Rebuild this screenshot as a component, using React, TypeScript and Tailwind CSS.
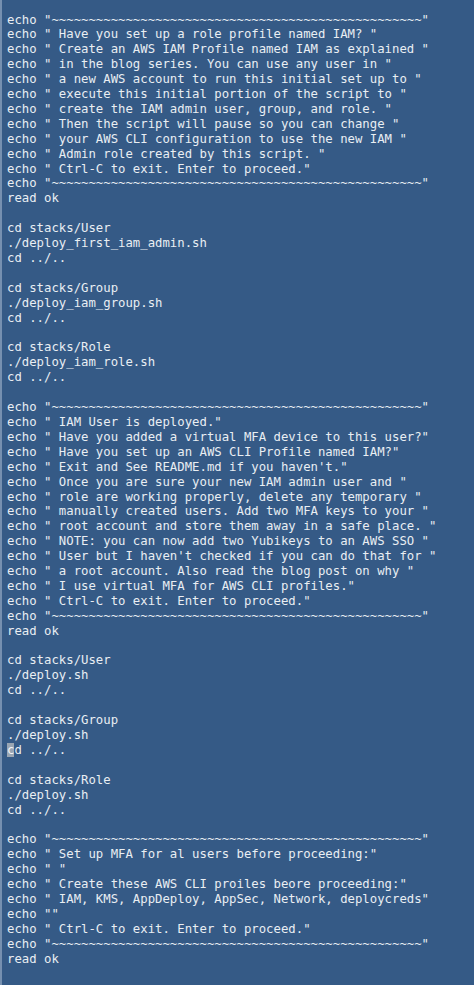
const lines: string[] = [
  'echo "~~~~~~~~~~~~~~~~~~~~~~~~~~~~~~~~~~~~~~~~~~~~~~~~~~"',
  'echo " Have you set up a role profile named IAM? "',
  'echo " Create an AWS IAM Profile named IAM as explained "',
  'echo " in the blog series. You can use any user in "',
  'echo " a new AWS account to run this initial set up to "',
  'echo " execute this initial portion of the script to "',
  'echo " create the IAM admin user, group, and role. "',
  'echo " Then the script will pause so you can change "',
  'echo " your AWS CLI configuration to use the new IAM "',
  'echo " Admin role created by this script. "',
  'echo " Ctrl-C to exit. Enter to proceed."',
  'echo "~~~~~~~~~~~~~~~~~~~~~~~~~~~~~~~~~~~~~~~~~~~~~~~~~~"',
  "read ok",
  "",
  "cd stacks/User",
  "./deploy_first_iam_admin.sh",
  "cd ../..",
  "",
  "cd stacks/Group",
  "./deploy_iam_group.sh",
  "cd ../..",
  "",
  "cd stacks/Role",
  "./deploy_iam_role.sh",
  "cd ../..",
  "",
  'echo "~~~~~~~~~~~~~~~~~~~~~~~~~~~~~~~~~~~~~~~~~~~~~~~~~~"',
  'echo " IAM User is deployed."',
  'echo " Have you added a virtual MFA device to this user?"',
  'echo " Have you set up an AWS CLI Profile named IAM?"',
  'echo " Exit and See README.md if you haven\'t."',
  'echo " Once you are sure your new IAM admin user and "',
  'echo " role are working properly, delete any temporary "',
  'echo " manually created users. Add two MFA keys to your "',
  'echo " root account and store them away in a safe place. "',
  'echo " NOTE: you can now add two Yubikeys to an AWS SSO "',
  'echo " User but I haven\'t checked if you can do that for "',
  'echo " a root account. Also read the blog post on why "',
  'echo " I use virtual MFA for AWS CLI profiles."',
  'echo " Ctrl-C to exit. Enter to proceed."',
  'echo "~~~~~~~~~~~~~~~~~~~~~~~~~~~~~~~~~~~~~~~~~~~~~~~~~~"',
  "read ok",
  "",
  "cd stacks/User",
  "./deploy.sh",
  "cd ../..",
  "",
  "cd stacks/Group",
  "./deploy.sh",
  "CURSOR",
  "",
  "cd stacks/Role",
  "./deploy.sh",
  "cd ../..",
  "",
  'echo "~~~~~~~~~~~~~~~~~~~~~~~~~~~~~~~~~~~~~~~~~~~~~~~~~~"',
  'echo " Set up MFA for al users before proceeding:"',
  'echo " "',
  'echo " Create these AWS CLI proiles beore proceeding:"',
  'echo " IAM, KMS, AppDeploy, AppSec, Network, deploycreds"',
  'echo ""',
  'echo " Ctrl-C to exit. Enter to proceed."',
  'echo "~~~~~~~~~~~~~~~~~~~~~~~~~~~~~~~~~~~~~~~~~~~~~~~~~~"',
  "read ok",
];

const App = () => {
    return (
        <div className="w-[474px] h-[985px] overflow-hidden bg-[#355a86] border-l-2 border-[#7690b0] pl-[5px] pt-[12.5px]">
            <div className="font-['DejaVu_Sans_Mono',monospace] text-[12.3px] leading-[14.92px] text-[#e9eef3]">
                {lines.map((line, i) =>
                    line === "CURSOR" ? (
                        <div key={i} className="whitespace-pre h-[14.92px]">
                            <span className="bg-[#9aa6b3] text-[#f4f6f8]">c</span>
                            d ../..
                        </div>
                    ) : (
                        <div key={i} className="whitespace-pre h-[14.92px]">
                            {line}
                        </div>
                    )
                )}
            </div>
        </div>
    );
};

export default App;
